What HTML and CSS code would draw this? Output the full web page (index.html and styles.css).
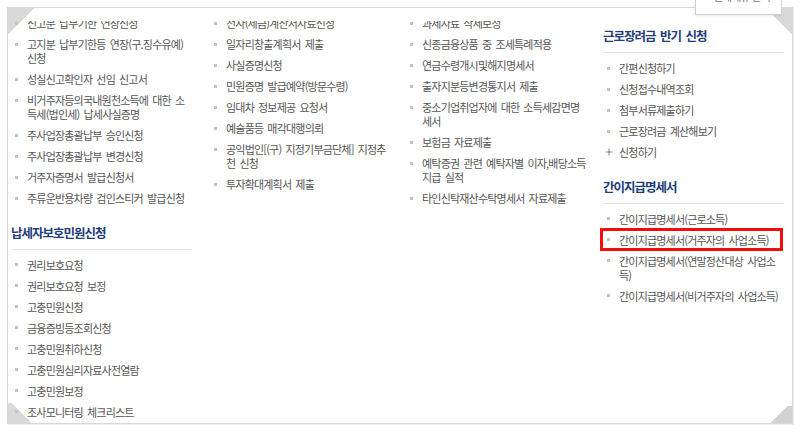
FILE: index.html
```html
<!DOCTYPE html>
<html lang="ko">
<head>
<meta charset="utf-8">
<title>메뉴</title>
<link rel="stylesheet" href="styles.css">
</head>
<body>
<div class="panel">
  <div class="tab"><span>전체메뉴 닫기 ✕</span></div>
  <div class="cols">
    <div class="col c1">
      <ul class="list">
        <li><span>신고분 납부기한 연장신청</span></li>
        <li><span>고지분 납부기한등 연장(구.징수유예)<br>신청</span></li>
        <li><span>성실신고확인자 선임 신고서</span></li>
        <li><span>비거주자등의국내원천소득에 대한 소<br>득세(법인세) 납세사실증명</span></li>
        <li><span>주사업장총괄납부 승인신청</span></li>
        <li><span>주사업장총괄납부 변경신청</span></li>
        <li><span>거주자증명서 발급신청서</span></li>
        <li><span>주류운반용차량 검인스티커 발급신청</span></li>
      </ul>
      <h3 class="head">납세자보호민원신청</h3>
      <ul class="list">
        <li><span>권리보호요청</span></li>
        <li><span>권리보호요청 보정</span></li>
        <li><span>고충민원신청</span></li>
        <li><span>금융증빙등조회신청</span></li>
        <li><span>고충민원취하신청</span></li>
        <li><span>고충민원심리자료사전열람</span></li>
        <li><span>고충민원보정</span></li>
        <li><span>조사모니터링 체크리스트</span></li>
      </ul>
    </div>
    <div class="col c2">
      <ul class="list">
        <li><span>전자(세금)계산서자료신청</span></li>
        <li><span>일자리창출계획서 제출</span></li>
        <li><span>사실증명신청</span></li>
        <li><span>민원증명 발급예약(방문수령)</span></li>
        <li><span>임대차 정보제공 요청서</span></li>
        <li><span>예술품등 매각대행의뢰</span></li>
        <li><span>공익법인[(구) 지정기부금단체] 지정추<br>천 신청</span></li>
        <li><span>투자확대계획서 제출</span></li>
      </ul>
    </div>
    <div class="col c3">
      <ul class="list">
        <li><span>과세자료 삭제보정</span></li>
        <li><span>신종금융상품 중 조세특례적용</span></li>
        <li><span>연금수령개시및해지명세서</span></li>
        <li><span>출자지분등변경통지서 제출</span></li>
        <li><span>중소기업취업자에 대한 소득세감면명<br>세서</span></li>
        <li><span>보험금 자료제출</span></li>
        <li><span>예탁증권 관련 예탁자별 이자,배당소득<br>지급 실적</span></li>
        <li><span>타인신탁재산수탁명세서 자료제출</span></li>
      </ul>
    </div>
    <div class="col c4">
      <h3 class="head">근로장려금 반기 신청</h3>
      <ul class="list">
        <li><span>간편신청하기</span></li>
        <li><span>신청접수내역조회</span></li>
        <li><span>첨부서류제출하기</span></li>
        <li><span>근로장려금 계산해보기</span></li>
        <li class="plus"><svg class="plus-ico" width="8" height="8" viewBox="0 0 8 8"><path d="M4 0.5V7.5M0.5 4H7.5" stroke="#b8b8b8" stroke-width="1.6"/><rect x="3" y="3" width="2" height="2" fill="#9a9a9a"/></svg><span>신청하기</span></li>
      </ul>
      <h3 class="head">간이지급명세서</h3>
      <ul class="list">
        <li><span>간이지급명세서(근로소득)</span></li>
        <li class="hl"><span>간이지급명세서(거주자의 사업소득)</span></li>
        <li><span>간이지급명세서(연말정산대상 사업소<br>득)</span></li>
        <li><span>간이지급명세서(비거주자의 사업소득)</span></li>
      </ul>
    </div>
  </div>
</div>
</body>
</html>
```

FILE: styles.css
```css
* { box-sizing: border-box; }
html, body { margin: 0; padding: 0; background: #fff; }
body {
  font-family: "Noto Sans CJK KR", "Noto Sans", sans-serif;
  font-kerning: none;
  font-feature-settings: "kern" 0, "palt" 0;
  width: 800px;
  height: 432px;
  overflow: hidden;
}
.panel {
  position: relative;
  margin: 7px 0 0 7px;
  width: 786px;
  height: 417px;
  border: 1px solid #d8d8d8;
  box-shadow: 1px 1px 0 #ececec;
  padding: 13px 0 0 3px;
  background-color: #fff;
  background-image:
    linear-gradient(135deg, #d9d9d9 50%, rgba(255,255,255,0) 50%),
    linear-gradient(225deg, #d9d9d9 50%, rgba(255,255,255,0) 50%),
    linear-gradient(45deg, #d9d9d9 50%, rgba(255,255,255,0) 50%),
    linear-gradient(315deg, #d2d2d2 50%, rgba(255,255,255,0) 50%);
  background-position: left top, right top, left bottom, right bottom;
  background-size: 26px 26px, 26px 26px, 26px 20px, 26px 17px;
  background-repeat: no-repeat;
}
.cols {
  display: grid;
  grid-template-columns: 199px 196px 197px 1fr;
  height: 402px;
  overflow: hidden;
}
.col { min-width: 0; }
.c1, .c2, .c3 { margin-top: -8.5px; }
.c4 { margin-top: 7px; padding-right: 9px; }
.list {
  list-style: none;
  margin: 0;
  padding: 0;
}
.list li {
  display: flex;
  align-items: flex-start;
  padding: 3.5px 0;
  font-size: 11px;
  line-height: 14px;
  letter-spacing: -0.8px;
  word-spacing: 1.8px;
  color: #555;
  white-space: nowrap;
}
.list li::before {
  content: "";
  flex: none;
  width: 3px;
  height: 3px;
  margin: 5.5px 9px 0 4px;
  background: #c2c2c2;
}
.list li.plus::before { display: none; }
.plus-ico {
  flex: none;
  margin: 3px 6px 0 2px;
}
.head {
  margin: 16px 0 0;
  width: 181px;
  padding-bottom: 8px;
  border-bottom: 1px solid #e3e3e3;
  font-size: 12.5px;
  line-height: 16px;
  letter-spacing: -1px;
  word-spacing: 2px;
  font-weight: 700;
  color: #1e3d79;
}
.c4 .head:first-child { margin-top: 0; }
.head + .list { margin-top: 4.5px; }
.list li.hl { position: relative; }
.list li.hl::after {
  content: "";
  position: absolute;
  left: -3px;
  right: 0;
  top: -1px;
  bottom: -1px;
  border: 3px solid #f20d0d;
}
.tab {
  position: absolute;
  top: -8px;
  left: 687px;
  right: 10px;
  height: 15px;
  border: 1px solid #cfcfcf;
  border-top: none;
  background: #fff;
  box-shadow: -1px 1px 2px rgba(0,0,0,0.08);
  overflow: hidden;
  padding-left: 17px;
}
.tab span {
  display: block;
  margin-top: -10px;
  font-size: 11px;
  line-height: 12px;
  letter-spacing: -1px;
  color: #777;
  white-space: nowrap;
}
```
